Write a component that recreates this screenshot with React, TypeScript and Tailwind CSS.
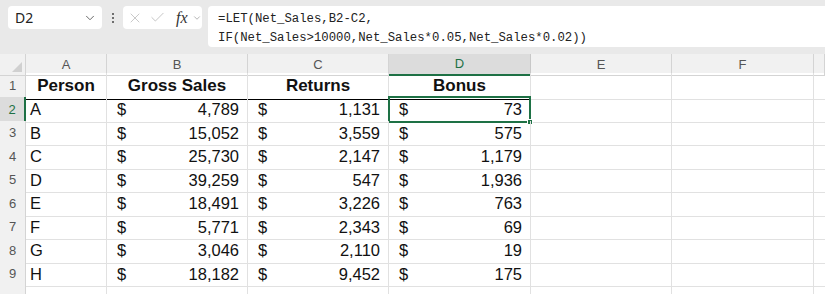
import { ChevronDown, X, Check } from 'lucide-react';

const rows: [string, number, number, number][] = [
  ['A', 4789, 1131, 73],
  ['B', 15052, 3559, 575],
  ['C', 25730, 2147, 1179],
  ['D', 39259, 547, 1936],
  ['E', 18491, 3226, 763],
  ['F', 5771, 2343, 69],
  ['G', 3046, 2110, 19],
  ['H', 18182, 9452, 175],
];

const fmt = (n: number) => n.toLocaleString('en-US');

const cols = ['A', 'B', 'C', 'D', 'E', 'F', ''];
const gridCls = 'grid grid-cols-[26px_81px_141px_141px_142px_141px_142px_1fr]';

function Money({ v, selected }: { v: number; selected?: boolean }) {
  return (
    <div className="relative flex items-center justify-between pl-[10px] pr-[8px] border-r border-b border-[#e1e1e1]">
      <span>$</span>
      <span>{fmt(v)}</span>
      {selected && (
        <div className="absolute -left-px -top-px -right-px -bottom-px border-2 border-[#1e7145]">
          <div className="absolute -right-[4px] -bottom-[4px] w-[6px] h-[6px] bg-[#1e7145] border border-white" />
        </div>
      )}
    </div>
  );
}

function Toolbar() {
  return (
    <div className="h-[54px] bg-[#e9e9e9] flex items-start pt-[6px] pl-[8px] gap-[6px]">
      <div className="w-[94px] h-[23px] bg-white rounded-[4px] flex items-center justify-between pl-[7px] pr-[5px] text-[14px] text-[#222] font-['Noto_Sans',sans-serif]">
        <span>D2</span>
        <ChevronDown size={14} strokeWidth={1.5} className="text-[#555]" />
      </div>
      <div className="w-[9px] h-[23px] flex flex-col items-center justify-center gap-[2px]">
        <span className="w-[2px] h-[2px] bg-[#444] rounded-full" />
        <span className="w-[2px] h-[2px] bg-[#444] rounded-full" />
        <span className="w-[2px] h-[2px] bg-[#444] rounded-full" />
      </div>
      <div className="w-[79px] h-[23px] bg-white rounded-[4px] flex items-center pl-[4px] gap-[4px] text-[#bbb]">
        <X size={16} strokeWidth={1.2} />
        <Check size={17} strokeWidth={1.2} className="ml-[2px]" />
        <span className="ml-[6px] text-[#333] italic text-[16px] font-['Liberation_Serif',serif] leading-none">fx</span>
        <ChevronDown size={10} strokeWidth={1.5} className="text-[#888]" />
      </div>
      <div className="flex-1 h-[41px] bg-white rounded-l-[4px] pl-[10px] pt-[4px] text-[12.3px] leading-[19px] text-[#222] font-['Liberation_Mono',monospace]">
        <div>=LET(Net_Sales,B2-C2,</div>
        <div>IF(Net_Sales&gt;10000,Net_Sales*0.05,Net_Sales*0.02))</div>
      </div>
    </div>
  );
}

export default function App() {
  return (
    <div className="w-[825px] h-[294px] overflow-hidden bg-white font-['Liberation_Sans',Arial,sans-serif] text-[#111]">
      <Toolbar />
      <div className={`${gridCls} h-[19px] bg-[#f1f1f1] text-[13px] text-[#555]`}>
        <div className="relative border-r border-b border-[#d4d4d4]">
          <div className="absolute right-[3px] bottom-[3px] w-0 h-0 border-l-[10px] border-l-transparent border-b-[10px] border-b-[#d0d0d0]" />
        </div>
        {cols.map((c, i) => (
          <div
            key={i}
            className={
              c === 'D'
                ? 'flex items-center justify-center bg-[#dcdcdc] text-[#1e7145] border-r border-[#c8c8c8] border-b-2 border-b-[#1e7145]'
                : 'flex items-center justify-center border-r border-b border-[#d4d4d4]'
            }
          >
            {c}
          </div>
        ))}
      </div>
      <div className={`${gridCls} h-[24px] text-[17px] font-bold`}>
        <div className="flex items-center justify-center bg-[#f1f1f1] text-[13px] font-normal text-[#555] border-r border-b border-[#d4d4d4]">1</div>
        <div className="flex items-center justify-center border-r border-[#e1e1e1] border-b border-b-black">Person</div>
        <div className="flex items-center justify-center border-r border-[#e1e1e1] border-b border-b-black">Gross Sales</div>
        <div className="flex items-center justify-center border-r border-[#e1e1e1] border-b border-b-black">Returns</div>
        <div className="flex items-center justify-center border-r border-[#e1e1e1] border-b border-b-black">Bonus</div>
        <div className="border-r border-b border-[#e1e1e1]" />
        <div className="border-r border-b border-[#e1e1e1]" />
        <div className="border-b border-[#e1e1e1]" />
      </div>
      {rows.map(([p, g, r, b], i) => (
        <div key={p} className={`${gridCls} h-[23.5px] text-[16.5px]`}>
          <div
            className={
              i === 0
                ? 'flex items-center justify-center bg-[#dcdcdc] text-[13px] text-[#1e7145] border-b border-[#d4d4d4] border-r-2 border-r-[#1e7145]'
                : 'flex items-center justify-center bg-[#f1f1f1] text-[13px] text-[#555] border-r border-b border-[#d4d4d4]'
            }
          >
            {i + 2}
          </div>
          <div className="flex items-center pl-[4px] border-r border-b border-[#e1e1e1]">{p}</div>
          <Money v={g} />
          <Money v={r} />
          <Money v={b} selected={i === 0} />
          <div className="border-r border-b border-[#e1e1e1]" />
          <div className="border-r border-b border-[#e1e1e1]" />
          <div className="border-b border-[#e1e1e1]" />
        </div>
      ))}
      <div className={`${gridCls} h-[23.5px] text-[16.5px]`}>
        <div className="flex items-start justify-center pt-[4px] bg-[#f1f1f1] text-[13px] text-[#555] border-r border-[#d4d4d4]">10</div>
        <div className="border-r border-[#e1e1e1]" />
        <div className="border-r border-[#e1e1e1]" />
        <div className="border-r border-[#e1e1e1]" />
        <div className="border-r border-[#e1e1e1]" />
        <div className="border-r border-[#e1e1e1]" />
        <div className="border-r border-[#e1e1e1]" />
        <div />
      </div>
    </div>
  );
}
